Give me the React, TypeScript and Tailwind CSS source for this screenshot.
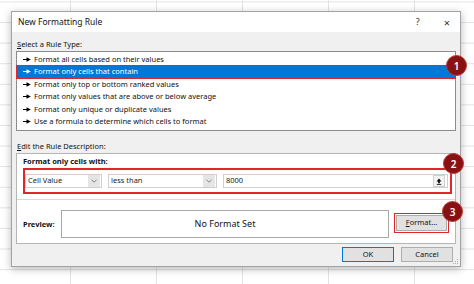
import React from 'react';

const font = "font-['Noto_Sans',sans-serif]";

const RuleArrow = () => (
  <svg width="8" height="5" viewBox="0 0 8 5" className="shrink-0">
    <path d="M0 2.5h4" stroke="#000" strokeWidth="1" />
    <path d="M3.5 0.3L7.8 2.5L3.5 4.7Z" fill="#000" />
  </svg>
);

const Badge = ({ n, className }: { n: string; className: string }) => (
  <div
    className={`absolute w-[21px] h-[21px] rounded-full bg-[#8a1111] border border-[#b33a3a] text-white text-[10px] font-semibold flex items-center justify-center leading-none ${className}`}
  >
    {n}
  </div>
);

const Chevron = () => (
  <div className="w-[12px] h-[12px] mr-[1px] bg-[#e5e5e5] flex items-center justify-center">
    <svg width="6" height="4" viewBox="0 0 6 4">
      <path d="M0.5 0.8L3 3.2L5.5 0.8" stroke="#777" strokeWidth="0.9" fill="none" />
    </svg>
  </div>
);

const Dropdown = ({ value, width }: { value: string; width: string }) => (
  <div className={`${width} h-[14px] bg-white border border-[#cfcfcf] flex items-center justify-between pl-[2px]`}>
    <span className="text-[7.5px] text-[#222]">{value}</span>
    <Chevron />
  </div>
);

const rules = [
  'Format all cells based on their values',
  'Format only cells that contain',
  'Format only top or bottom ranked values',
  'Format only values that are above or below average',
  'Format only unique or duplicate values',
  'Use a formula to determine which cells to format',
];

export default function App() {
  return (
    <div
      className={`${font} w-[474px] h-[284px] overflow-hidden bg-white bg-[linear-gradient(to_right,#e3e3e3_1px,transparent_1px),linear-gradient(to_bottom,#e3e3e3_1px,transparent_1px)] bg-[size:86px_20.6px] bg-[position:70px_1.4px] pl-[11px] pt-[11px]`}
    >
      <div className="relative w-[450px] h-[256px] border border-[#a3a3a3] bg-[#f0f0f0] shadow-[0_2px_8px_rgba(0,0,0,0.28)] flex flex-col">
        {/* title bar */}
        <div className="h-[20px] bg-white flex items-center pl-[6px] pr-[10px]">
          <span className="text-[8.5px] text-[#111]">New Formatting Rule</span>
          <span className="ml-auto text-[9px] text-[#333]">?</span>
          <span className="ml-[24px] text-[11px] leading-none text-[#333]">×</span>
        </div>

        <div className="px-[4px] flex flex-col">
          <div className="mt-[5px] h-[14px] leading-[14px] pl-[1px] text-[7.5px] text-[#111]">
            <span className="underline">S</span>elect a Rule Type:
          </div>

          {/* rule list */}
          <div className="h-[80px] bg-white border border-[#8c8c8c] pt-[1px]">
            {rules.map((r, i) => (
              <div
                key={r}
                className={`h-[12.5px] flex items-center gap-[3px] pl-[6px] text-[7.5px] ${
                  i === 1
                    ? 'bg-[#0078d7] text-white outline-[1.5px] outline-solid outline-[#e0262c]'
                    : 'text-[#111]'
                }`}
              >
                {i === 1 ? (
                  <svg width="8" height="5" viewBox="0 0 8 5" className="shrink-0">
                    <path d="M0 2.5h4" stroke="#fff" strokeWidth="1" />
                    <path d="M3.5 0.3L7.8 2.5L3.5 4.7Z" fill="#fff" />
                  </svg>
                ) : (
                  <RuleArrow />
                )}
                {r}
              </div>
            ))}
          </div>

          <div className="mt-[8px] h-[14px] leading-[14px] pl-[1px] text-[7.5px] text-[#111]">
            <span className="underline">E</span>dit the Rule Description:
          </div>

          {/* description panel */}
          <div className="h-[91px] bg-white border border-[#b5b5b5] flex flex-col">
            <div className="h-[46px] border-b border-[#d9d9d9] pl-[6px] pr-[3px] flex flex-col">
              <div className="mt-[2px] h-[11px] leading-[11px] text-[7.5px] font-bold text-[#111]">
                Format only cells with:
              </div>
              <div className="mt-[1px] h-[26px] border-2 border-[#e0262c] flex items-center gap-[6px] px-0">
                <Dropdown value="Cell Value" width="w-[77px]" />
                <Dropdown value="less than" width="w-[109px]" />
                <div className="flex-1 mr-[2px] h-[14px] bg-white border border-[#cfcfcf] flex items-center justify-between pl-[2px]">
                  <span className="text-[7.5px] text-[#222]">8000</span>
                  <div className="w-[12px] h-[12px] mr-[2px] bg-[#f3f3f3] border border-[#cfcfcf] flex items-center justify-center">
                    <svg width="6" height="7" viewBox="0 0 6 7">
                      <path d="M3 0.5L5.5 3.5H3.9V5.2H2.1V3.5H0.5Z" fill="#111" />
                      <path d="M0.8 6.4H5.2" stroke="#111" strokeWidth="0.9" />
                    </svg>
                  </div>
                </div>
              </div>
            </div>
            <div className="flex-1 flex items-start pl-[6px] pt-[10px]">
              <span className="w-[38px] mt-[9px] text-[7.5px] font-bold text-[#111]">Preview:</span>
              <div className="w-[328px] h-[28px] border border-[#a8a8a8] bg-white flex items-center justify-center text-[9px] text-[#111]">
                No Format Set
              </div>
              <div className="ml-[5px] mt-[3px] w-[55px] h-[20px] border-[1.5px] border-[#e0262c] flex items-center justify-center">
                <div className="w-[51px] h-[16px] bg-[#e1e1e1] border border-[#adadad] flex items-center justify-center text-[7.5px] text-[#111]">
                  <span className="underline">F</span>ormat...
                </div>
              </div>
            </div>
          </div>
        </div>

        {/* buttons */}
        <div className="mt-[3px] flex justify-end gap-[7px] pr-[7px]">
          <div className="w-[52px] h-[15px] bg-[#e1e1e1] border border-[#0078d7] flex items-center justify-center text-[7.5px] text-[#111]">
            OK
          </div>
          <div className="w-[52px] h-[15px] bg-[#e1e1e1] border border-[#adadad] flex items-center justify-center text-[7.5px] text-[#111]">
            Cancel
          </div>
        </div>

        {/* resize grip */}
        <svg width="6" height="6" viewBox="0 0 6 6" className="absolute right-[1px] bottom-[1px]">
          <rect x="4" y="0" width="1" height="1" fill="#b0b0b0" />
          <rect x="2" y="2" width="1" height="1" fill="#b0b0b0" />
          <rect x="4" y="2" width="1" height="1" fill="#b0b0b0" />
          <rect x="0" y="4" width="1" height="1" fill="#b0b0b0" />
          <rect x="2" y="4" width="1" height="1" fill="#b0b0b0" />
          <rect x="4" y="4" width="1" height="1" fill="#b0b0b0" />
        </svg>

        <Badge n="1" className="left-[434px] top-[43px]" />
        <Badge n="2" className="left-[431px] top-[141px]" />
        <Badge n="3" className="left-[430px] top-[189px]" />
      </div>
    </div>
  );
}
